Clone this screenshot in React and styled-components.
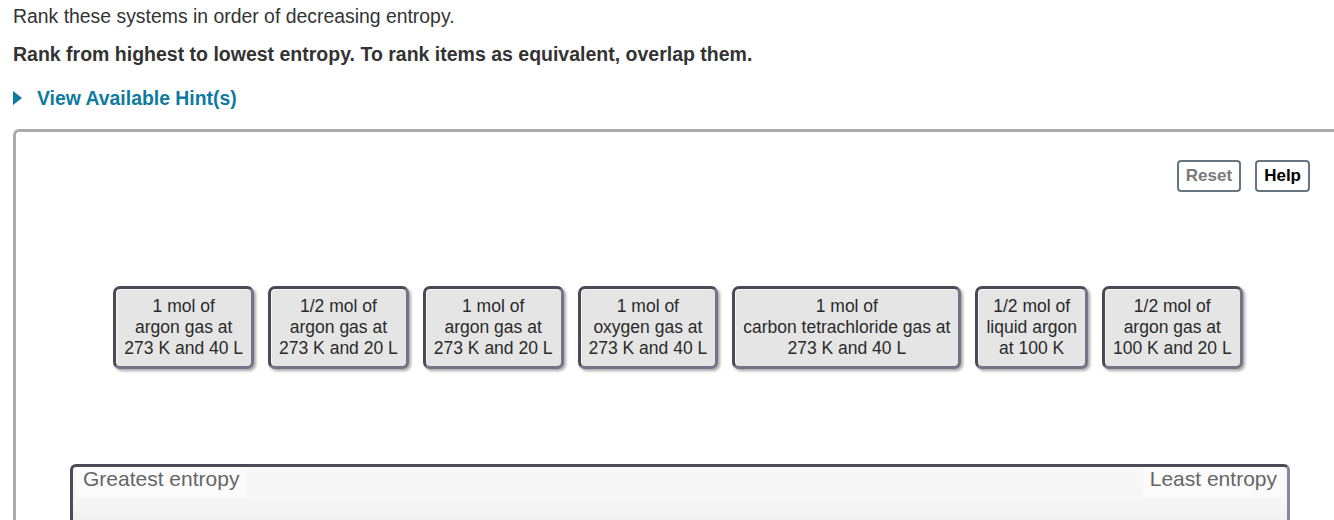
import styled, { createGlobalStyle } from "styled-components";

const GlobalStyle = createGlobalStyle`
    * {
        box-sizing: border-box;
    }

    body {
        margin: 0;
        background: #ffffff;
        font-family: "Liberation Sans", Arial, sans-serif;
        overflow: hidden;
    }
`;

const items = [
    ["1 mol of", "argon gas at", "273 K and 40 L"],
    ["1/2 mol of", "argon gas at", "273 K and 20 L"],
    ["1 mol of", "argon gas at", "273 K and 20 L"],
    ["1 mol of", "oxygen gas at", "273 K and 40 L"],
    ["1 mol of", "carbon tetrachloride gas at", "273 K and 40 L"],
    ["1/2 mol of", "liquid argon", "at 100 K"],
    ["1/2 mol of", "argon gas at", "100 K and 20 L"],
];

export default function App() {
    return (
        <Page>
            <GlobalStyle />
            <Question>Rank these systems in order of decreasing entropy.</Question>
            <Instruction>Rank from highest to lowest entropy. To rank items as equivalent, overlap them.</Instruction>
            <Hint>
                <svg width="9" height="14" viewBox="0 0 9 14">
                    <polygon points="0,0 9,7 0,14" fill="#0f7a9f" />
                </svg>
                <span>View Available Hint(s)</span>
            </Hint>

            <Workspace>
                <Toolbar>
                    <ToolButton muted>Reset</ToolButton>
                    <ToolButton>Help</ToolButton>
                </Toolbar>

                <CardRow>
                    {items.map((lines, i) => (
                        <Card key={i}>
                            {lines.map((l, j) => (
                                <span key={j}>{l}</span>
                            ))}
                        </Card>
                    ))}
                </CardRow>

                <DropZone>
                    <ZoneLabel>Greatest entropy</ZoneLabel>
                    <ZoneLabel>Least entropy</ZoneLabel>
                </DropZone>
            </Workspace>
        </Page>
    );
}

const Page = styled.div`
    padding: 5px 0 0 13px;
    width: 1334px;
    height: 520px;
    overflow: hidden;
`;

const Question = styled.p`
    margin: 0;
    font-size: 19.4px;
    line-height: 22px;
    color: #333333;
`;

const Instruction = styled.p`
    margin: 16px 0 0 0;
    font-size: 19.5px;
    line-height: 22px;
    font-weight: 700;
    color: #333333;
`;

const Hint = styled.div`
    margin-top: 22px;
    display: flex;
    align-items: center;
    gap: 15px;
    font-size: 19.4px;
    line-height: 22px;
    font-weight: 700;
    color: #0f7a9f;
`;

const Workspace = styled.div`
    margin-top: 20px;
    width: 1332px;
    height: 420px;
    border: 3px solid #ababab;
    border-right: none;
    border-bottom: none;
    border-radius: 6px 0 0 0;
    padding: 28px 35px 0 0;
    display: flex;
    flex-direction: column;
`;

const Toolbar = styled.div`
    display: flex;
    justify-content: flex-end;
    gap: 14px;
`;

const ToolButton = styled.button`
    height: 32px;
    padding: 0 7px;
    background: #ffffff;
    border: 2px solid #64777f;
    border-radius: 4px;
    font-family: "Liberation Sans", Arial, sans-serif;
    font-size: 17px;
    font-weight: 700;
    color: ${(p) => (p.muted ? "#7a7a7a" : "#000000")};
`;

const CardRow = styled.div`
    margin-top: 94px;
    padding-left: 30px;
    display: flex;
    justify-content: center;
    gap: 14px;
`;

const Card = styled.div`
    display: flex;
    flex-direction: column;
    align-items: center;
    padding: 7px 8px;
    background: #e5e5e5;
    border: 3px solid #4a4955;
    border-right-color: #767288;
    border-bottom-color: #767288;
    border-radius: 7px;
    box-shadow: inset 1px 1px 0 #f4f4f4, 2px 2px 3px rgba(0, 0, 0, 0.35);
    font-size: 17.5px;
    line-height: 21px;
    color: #2a2a2a;
    white-space: nowrap;
`;

const DropZone = styled.div`
    margin: 95px 0 0 54px;
    width: 1220px;
    flex: 1;
    border: 3px solid #4d4b58;
    border-right-color: #8c889c;
    border-bottom: none;
    border-radius: 6px 6px 0 0;
    background: linear-gradient(to bottom, #f8f8f8 0%, #f6f6f6 40%, #e9e9e9 100%);
    display: flex;
    justify-content: space-between;
    align-items: flex-start;
    padding: 0 3px;
`;

const ZoneLabel = styled.div`
    padding: 0 7px 6px 7px;
    background: #fbfbfb;
    font-size: 21px;
    line-height: 24px;
    color: #666666;
`;
